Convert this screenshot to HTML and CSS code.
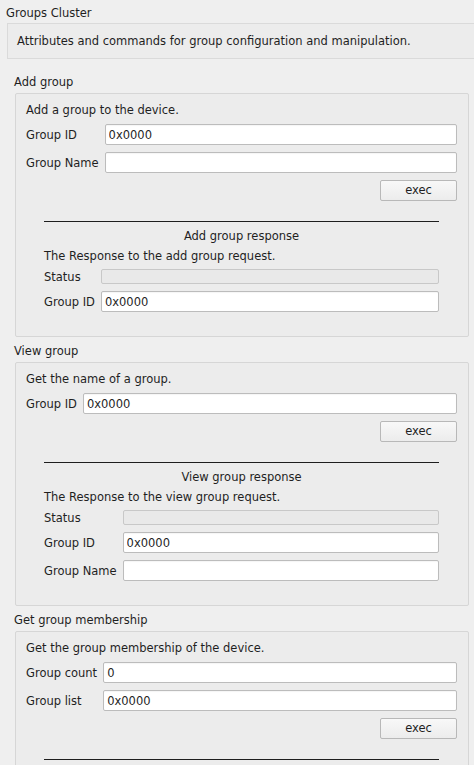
FILE: index.html
```html
<!DOCTYPE html>
<html>
<head>
<meta charset="utf-8">
<title>Groups Cluster</title>
<link rel="stylesheet" href="styles.css">
</head>
<body>
<div class="page">
  <div class="cluster-title">Groups Cluster</div>
  <div class="cluster-desc">Attributes and commands for group configuration and manipulation.</div>

  <div class="section-title first">Add group</div>
  <div class="group-box">
    <div class="desc">Add a group to the device.</div>
    <div class="form">
      <label>Group ID</label><input class="field" type="text" value="0x0000">
      <label>Group Name</label><input class="field" type="text" value="">
    </div>
    <div class="actions"><button class="btn">exec</button></div>
    <div class="response">
      <div class="sep"></div>
      <div class="resp-title">Add group response</div>
      <div class="resp-desc">The Response to the add group request.</div>
      <div class="form resp-form">
        <label>Status</label><input class="field status" type="text" value="" disabled>
        <label>Group ID</label><input class="field" type="text" value="0x0000">
      </div>
    </div>
  </div>

  <div class="section-title">View group</div>
  <div class="group-box">
    <div class="desc">Get the name of a group.</div>
    <div class="form">
      <label>Group ID</label><input class="field" type="text" value="0x0000">
    </div>
    <div class="actions"><button class="btn">exec</button></div>
    <div class="response">
      <div class="sep"></div>
      <div class="resp-title">View group response</div>
      <div class="resp-desc">The Response to the view group request.</div>
      <div class="form resp-form">
        <label>Status</label><input class="field status" type="text" value="" disabled>
        <label>Group ID</label><input class="field" type="text" value="0x0000">
        <label>Group Name</label><input class="field" type="text" value="">
      </div>
    </div>
  </div>

  <div class="section-title">Get group membership</div>
  <div class="group-box">
    <div class="desc">Get the group membership of the device.</div>
    <div class="form">
      <label>Group count</label><input class="field" type="text" value="0">
      <label>Group list</label><input class="field" type="text" value="0x0000">
    </div>
    <div class="actions"><button class="btn">exec</button></div>
    <div class="response">
      <div class="sep"></div>
    </div>
  </div>
</div>
</body>
</html>
```

FILE: styles.css
```css
html, body {
  margin: 0;
  padding: 0;
}

body {
  width: 474px;
  height: 765px;
  overflow: hidden;
  background: #efefef;
  color: #1f1f1f;
  font-family: "DejaVu Sans", sans-serif;
  font-size: 11.5px;
  line-height: 14px;
}

.page {
  display: flex;
  flex-direction: column;
}

.cluster-title {
  padding: 6px 0 3px 6px;
  height: 14px;
}

.cluster-desc {
  margin-left: 7px;
  margin-right: -20px;
  height: 34px;
  line-height: 34px;
  padding-left: 9px;
  border: 1px solid #dadada;
  background: #ececec;
  white-space: nowrap;
}

.section-title {
  margin: 7px 0 4px 14px;
}

.section-title.first {
  margin-top: 16px;
}

.group-box {
  margin: 0 5px 0 15px;
  padding: 9px 11px 24px 10px;
  border: 1px solid #d6d6d6;
  border-radius: 2px;
  background: #ececec;
  display: flex;
  flex-direction: column;
}

.desc {
  margin-bottom: 7px;
  white-space: nowrap;
}

.form {
  display: grid;
  grid-template-columns: max-content 1fr;
  column-gap: 6px;
  row-gap: 7px;
  align-items: center;
}

.form label {
  white-space: nowrap;
}

.field {
  box-sizing: border-box;
  height: 21px;
  width: 100%;
  margin: 0;
  padding: 0 3px;
  border: 1px solid #bcbcbc;
  border-radius: 2px;
  background: #ffffff;
  color: #1f1f1f;
  font-family: "DejaVu Sans", sans-serif;
  font-size: 11.5px;
  box-shadow: inset 0 1px 1px rgba(0, 0, 0, 0.04);
  outline: none;
}

.field.status {
  height: 15px;
  background: #e9e9e9;
  border-color: #c8c8c8;
  box-shadow: none;
}

.actions {
  display: flex;
  justify-content: flex-end;
  margin-top: 7px;
}

.btn {
  box-sizing: border-box;
  width: 77px;
  height: 21px;
  margin: 0;
  padding: 0;
  border: 1px solid #b8b8b8;
  border-radius: 2px;
  background: linear-gradient(#f8f8f8, #ececec);
  color: #1f1f1f;
  font-family: "DejaVu Sans", sans-serif;
  font-size: 11.5px;
  line-height: 19px;
}

.response {
  margin: 20px 18px 0 18px;
  display: flex;
  flex-direction: column;
}

.sep {
  height: 1px;
  background: #1e1e1e;
}

.resp-title {
  margin-top: 7px;
  text-align: center;
}

.resp-desc {
  margin-top: 6px;
  white-space: nowrap;
}

.resp-form {
  margin-top: 6px;
}
```
